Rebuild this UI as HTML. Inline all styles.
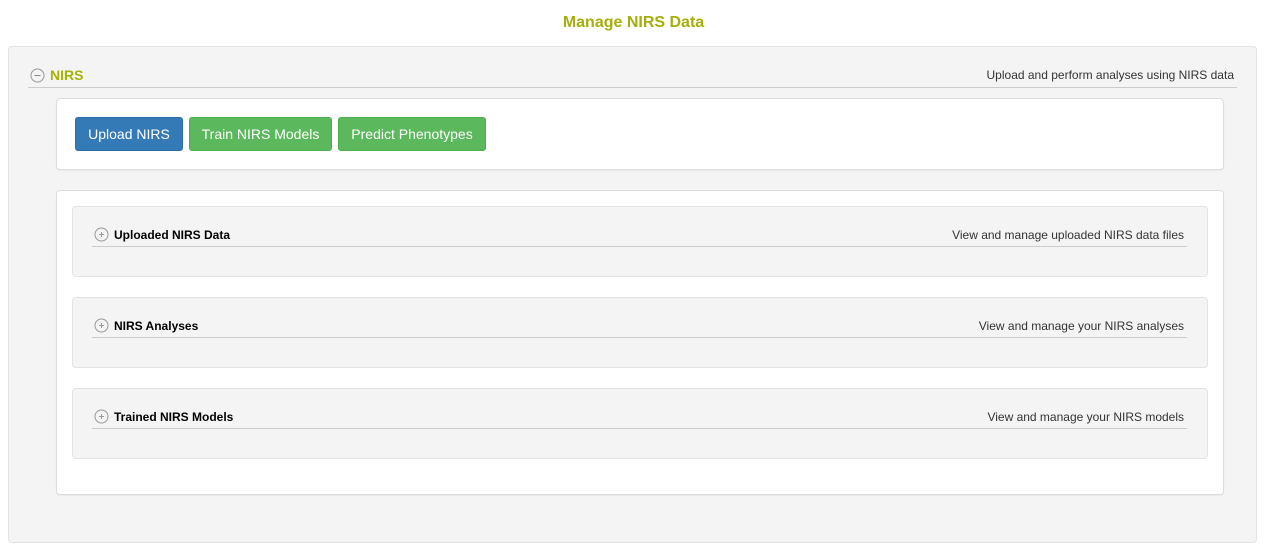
<!DOCTYPE html><html><head><style>
body{margin:0;width:1267px;height:550px;background:#fff;font-family:"Liberation Sans",sans-serif;position:relative;overflow:hidden}
.a{position:absolute}
.t{left:0;width:1267px;top:14px;text-align:center;font-size:16px;font-weight:bold;color:#a6ae0a}
.outer{left:8px;top:46px;width:1247px;height:495px;background:#f4f4f4;border:1px solid #e3e3e3;border-radius:4px}
.card{background:#fff;border:1px solid #ddd;border-radius:4px;box-shadow:0 1px 1px rgba(0,0,0,.05)}
.btn{top:117px;height:32px;border-radius:3px;color:#fff;font-size:14px;line-height:32px;text-align:center}
.sub{left:72px;width:1134px;height:69px;background:#f4f4f4;border:1px solid #e3e3e3;border-radius:4px}
.h{font-size:12px;font-weight:bold;color:#000}
.d{font-size:12px;color:#333;text-align:right}
.line{height:1px;background:#ccc}
</style></head><body>
<div class="a t">Manage NIRS Data</div>
<div class="a outer"></div>
<svg class="a" style="left:30px;top:68px" width="15" height="15"><circle cx="7.5" cy="7.5" r="6.5" fill="none" stroke="#999" stroke-width="1"/><path d="M4.5 7.5h6" stroke="#888"/></svg>
<div class="a" style="left:50px;top:67px;font-size:14px;font-weight:bold;color:#a6b400">NIRS</div>
<div class="a d" style="right:33px;top:68px">Upload and perform analyses using NIRS data</div>
<div class="a line" style="left:28px;top:87px;width:1209px"></div>
<div class="a card" style="left:56px;top:98px;width:1166px;height:70px"></div>
<div class="a btn" style="left:75px;width:106px;background:#337ab7;border:1px solid #2e6da4">Upload NIRS</div>
<div class="a btn" style="left:189px;width:141px;background:#5cb85c;border:1px solid #4cae4c">Train NIRS Models</div>
<div class="a btn" style="left:338px;width:146px;background:#5cb85c;border:1px solid #4cae4c">Predict Phenotypes</div>
<div class="a card" style="left:56px;top:190px;width:1166px;height:303px"></div>

<div class="a sub" style="top:206px"></div>
<svg class="a" style="left:94px;top:227px" width="15" height="15"><circle cx="7.5" cy="7.5" r="6.5" fill="none" stroke="#999"/><path d="M5 7.5h5M7.5 5v5" stroke="#999"/></svg>
<div class="a h" style="left:114px;top:228px">Uploaded NIRS Data</div>
<div class="a d" style="right:83px;top:228px">View and manage uploaded NIRS data files</div>
<div class="a line" style="left:92px;top:246px;width:1095px"></div>

<div class="a sub" style="top:297px"></div>
<svg class="a" style="left:94px;top:318px" width="15" height="15"><circle cx="7.5" cy="7.5" r="6.5" fill="none" stroke="#999"/><path d="M5 7.5h5M7.5 5v5" stroke="#999"/></svg>
<div class="a h" style="left:114px;top:319px">NIRS Analyses</div>
<div class="a d" style="right:83px;top:319px">View and manage your NIRS analyses</div>
<div class="a line" style="left:92px;top:337px;width:1095px"></div>

<div class="a sub" style="top:388px"></div>
<svg class="a" style="left:94px;top:409px" width="15" height="15"><circle cx="7.5" cy="7.5" r="6.5" fill="none" stroke="#999"/><path d="M5 7.5h5M7.5 5v5" stroke="#999"/></svg>
<div class="a h" style="left:114px;top:410px">Trained NIRS Models</div>
<div class="a d" style="right:83px;top:410px">View and manage your NIRS models</div>
<div class="a line" style="left:92px;top:428px;width:1095px"></div>
</body></html>
